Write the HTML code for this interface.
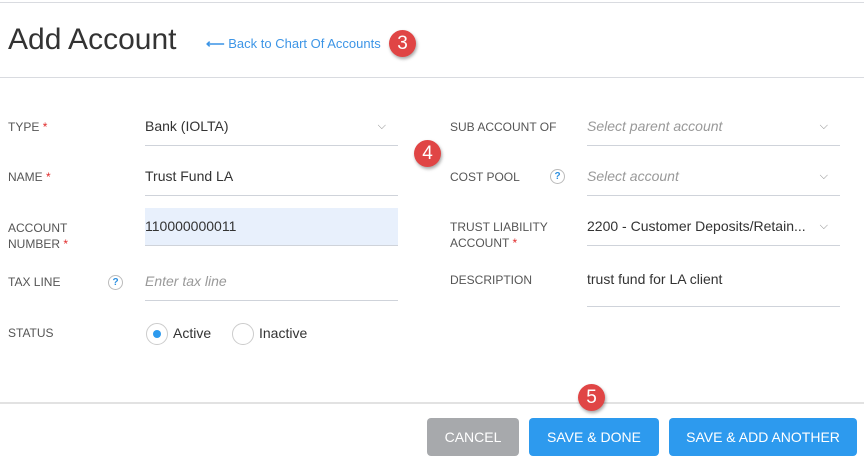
<!DOCTYPE html><html><head><style>
body{margin:0;width:864px;height:471px;background:#fff;font-family:"Liberation Sans",sans-serif;position:relative;overflow:hidden;color:#333}
div,span{position:absolute}
.hl{height:1px;background:#d9dbe0;left:0;width:864px}
.lab{font-size:12px;color:#555;left:8px}
.rl{font-size:12px;color:#555;left:450px}
.req{color:#e02b2b}
.inp{border-bottom:1px solid #cfd3da;height:37px;font-size:14px;line-height:37px;color:#333}
.ph{color:#999;font-style:italic}
.chev{right:12px;top:0;font-size:11px;color:#888}
.badge{width:27px;height:27px;border-radius:50%;background:#e04545;color:#fff;font-size:19px;text-align:center;line-height:27px;box-shadow:1px 2px 3px rgba(0,0,0,.35)}
.q{width:13px;height:13px;border:1.5px solid #bbb;border-radius:50%;font-size:10px;font-weight:bold;color:#2d8fe0;text-align:center;line-height:13px}
.btn{top:418px;height:38px;border-radius:4px;color:#fff;font-size:14px;text-align:center;line-height:38px;background:#2d9aee}
.rad{width:20px;height:20px;border:1px solid #ccc;border-radius:50%;top:323px}
</style></head><body>
<div class="hl" style="top:2px"></div>
<div style="left:8px;top:23px;font-size:30px;color:#333">Add Account</div>
<div style="left:206px;top:36px;font-size:13px;color:#3d95e6"><b style="font-weight:bold">⟵</b> Back to Chart Of Accounts</div>
<div class="badge" style="left:389px;top:30px">3</div>
<div class="hl" style="top:77px"></div>

<div class="lab" style="top:120px">TYPE <span class="req" style="position:static">*</span></div>
<div class="inp" style="left:145px;width:253px;top:108px">Bank (IOLTA)<span class="chev">⌵</span></div>
<div class="lab" style="top:170px">NAME <span class="req" style="position:static">*</span></div>
<div class="inp" style="left:145px;width:253px;top:158px">Trust Fund LA</div>
<div class="lab" style="top:220px;line-height:16px">ACCOUNT<br>NUMBER <span class="req" style="position:static">*</span></div>
<div class="inp" style="left:145px;width:253px;top:208px;background:#e8f0fc">110000000011</div>
<div class="lab" style="top:275px">TAX LINE</div>
<div class="q" style="left:108px;top:275px">?</div>
<div class="inp ph" style="left:145px;width:253px;top:263px">Enter tax line</div>
<div class="lab" style="top:326px">STATUS</div>
<div class="rad" style="left:146px"><span style="left:6px;top:6px;width:8px;height:8px;border-radius:50%;background:#2d9aee"></span></div>
<div style="left:173px;top:325px;font-size:14px">Active</div>
<div class="rad" style="left:232px"></div>
<div style="left:259px;top:325px;font-size:14px">Inactive</div>

<div class="badge" style="left:414px;top:140px">4</div>

<div class="rl" style="top:120px">SUB ACCOUNT OF</div>
<div class="inp ph" style="left:587px;width:253px;top:108px">Select parent account<span class="chev" style="font-style:normal">⌵</span></div>
<div class="rl" style="top:170px">COST POOL</div>
<div class="q" style="left:550px;top:169px">?</div>
<div class="inp ph" style="left:587px;width:253px;top:158px">Select account<span class="chev" style="font-style:normal">⌵</span></div>
<div class="rl" style="top:219px;line-height:16px">TRUST LIABILITY<br>ACCOUNT <span class="req" style="position:static">*</span></div>
<div class="inp" style="left:587px;width:253px;top:208px;white-space:nowrap;overflow:hidden">2200 - Customer Deposits/Retain...<span class="chev">⌵</span></div>
<div class="rl" style="top:273px">DESCRIPTION</div>
<div class="inp" style="left:587px;width:253px;top:261px;height:45px;line-height:37px">trust fund for LA client</div>

<div class="hl" style="top:402px;background:#e2e2e2;height:2px"></div>
<div class="badge" style="left:578px;top:384px">5</div>
<div class="btn" style="left:427px;width:92px;background:#a7a9ac">CANCEL</div>
<div class="btn" style="left:529px;width:130px">SAVE &amp; DONE</div>
<div class="btn" style="left:669px;width:188px">SAVE &amp; ADD ANOTHER</div>
</body></html>
